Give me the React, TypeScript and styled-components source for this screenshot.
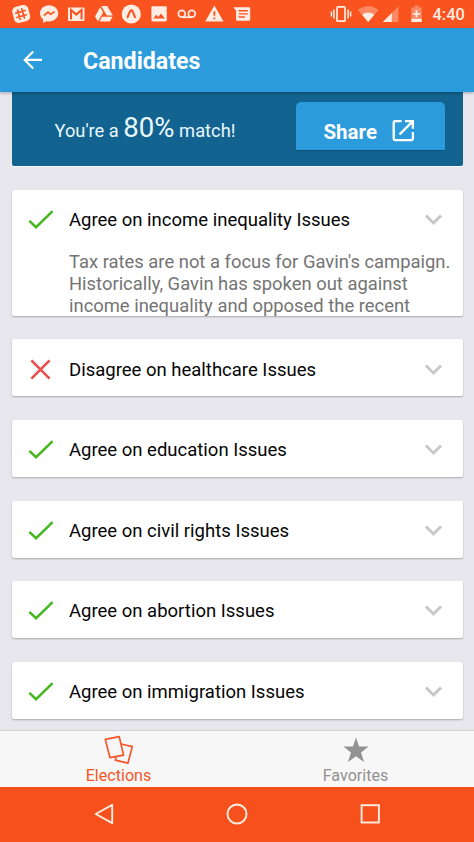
import React from 'react';
import styled, { createGlobalStyle } from 'styled-components';

const GlobalStyle = createGlobalStyle`
  *, *::before, *::after { box-sizing: border-box; }
  body { margin: 0; font-family: Roboto, "Noto Sans", sans-serif; }
  svg { display: block; flex: none; }
`;

const Screen = styled.div`
  display: flex;
  flex-direction: column;
  width: 474px;
  height: 842px;
  overflow: hidden;
  background: #e8e7ed;
`;

const StatusBar = styled.div`
  display: flex;
  align-items: center;
  justify-content: space-between;
  flex: none;
  height: 28px;
  padding: 0 9.5px 0 11px;
  background: #f9531f;
  color: #ffece3;
`;

const Notifications = styled.div`
  display: flex;
  gap: 7.6px;
`;

const SystemIcons = styled.div`
  display: flex;
  align-items: center;
`;

const BatterySlot = styled.span`
  margin-left: 11px;
`;

const Clock = styled.span`
  margin-left: 10px;
  width: 32px;
  font-size: 16.4px;
  font-weight: 500;
  line-height: 28px;
  padding-top: 1px;
  white-space: nowrap;
`;

const AppBar = styled.header`
  display: flex;
  align-items: center;
  gap: 37px;
  flex: none;
  z-index: 1;
  height: 64px;
  padding: 0 20px;
  background: #2c9bdb;
  color: #fff;
  box-shadow: 0 1px 3px rgba(0, 0, 0, 0.3);
`;

const Title = styled.h1`
  margin: 2px 0 0;
  font-size: 23.2px;
  line-height: 28px;
  font-weight: 700;
`;

const Content = styled.main`
  display: flex;
  flex-direction: column;
  gap: 23.6px;
  flex: 1;
  min-height: 0;
  padding: 0 11.5px;
  overflow: hidden;
`;

const MatchBanner = styled.section`
  display: flex;
  align-items: flex-start;
  justify-content: space-between;
  flex: none;
  height: 74px;
  padding: 10px 17.5px 0 43px;
  border-radius: 0 0 2px 2px;
  background: #136390;
  color: #e9f7ff;
  box-shadow: 0 1px 1px rgba(255, 255, 255, 0.8);
`;

const MatchText = styled.p`
  margin: 9px 0 0;
  font-size: 18.3px;
  line-height: 34px;
  white-space: nowrap;
`;

const Percent = styled.span`
  font-size: 27.6px;
`;

const ShareButton = styled.button`
  display: flex;
  align-items: center;
  gap: 14px;
  width: 149px;
  height: 48px;
  padding: 11px 0 0 27.5px;
  border: 0;
  border-radius: 5px 5px 0 0;
  background: #2c9bdb;
  color: #fff;
  font: 700 20.5px Roboto, sans-serif;
  box-shadow: 0 1px 1px rgba(0, 30, 60, 0.25);
`;

const Card = styled.article<{ $expanded?: boolean }>`
  flex: none;
  height: ${(p) => (p.$expanded ? 126.2 : 57)}px;
  overflow: hidden;
  border-radius: 2.5px;
  background: #fff;
  box-shadow: 0 1px 2px rgba(0, 0, 0, 0.27);
`;

const CardHeader = styled.div`
  display: flex;
  align-items: center;
  height: 60.5px;
  padding: 0 19px 0 16px;
`;

const CardTitle = styled.h2`
  flex: 1;
  margin: 0 0 0 15.5px;
  color: #050505;
  font-size: 18.5px;
  line-height: 24px;
  font-weight: 400;
  white-space: nowrap;
`;

const CardBody = styled.p`
  margin: 0 0 0 57.5px;
  padding-top: 1.4px;
  color: #747474;
  font-size: 18.4px;
  line-height: 21.8px;
  white-space: nowrap;
`;

const TabBar = styled.nav`
  display: grid;
  grid-template-columns: 1fr 1fr;
  flex: none;
  height: 56.5px;
  border-top: 1px solid #d3d2d5;
  background: #f7f7f7;
`;

const Tab = styled.div<{ $active?: boolean }>`
  display: flex;
  flex-direction: column;
  align-items: center;
  gap: 1px;
  padding-top: 4px;
  color: ${(p) => (p.$active ? '#f4562a' : '#929292')};
  font-size: 16.1px;
  line-height: 20px;
`;

const NavBar = styled.div`
  display: flex;
  align-items: center;
  justify-content: space-between;
  flex: none;
  height: 55.5px;
  padding: 0 92px;
  background: #f6511d;
`;

const BG = '#f9531f';

const SlackIcon = () => (
  <svg width="20" height="20" viewBox="0 0 20 20">
    <rect x="2" y="1.8" width="16.4" height="16.4" rx="4.6" transform="rotate(-14 10 10)" fill="currentColor" />
    <g stroke={BG} strokeWidth="1.6" strokeLinecap="round" transform="rotate(-16 10 10)">
      <path d="M7.8 5.2v9.6M12.2 5.2v9.6M5.2 7.8h9.6M5.2 12.2h9.6" />
    </g>
  </svg>
);

const MessengerIcon = () => (
  <svg width="20" height="20" viewBox="0 0 20 20">
    <path d="M10.1 1.2c-5.1 0-9.1 3.6-9.1 8.1 0 2.6 1.2 4.7 3.1 6.2v3.6l3.3-1.9c.9.2 1.8.3 2.7.3 5.1 0 9.1-3.7 9.1-8.2s-4-8.1-9.1-8.1z" fill="currentColor" />
    <path d="m4.9 11.6 4.2-3.5 2.4 2.2 4-2.5" fill="none" stroke={BG} strokeWidth="1.6" />
  </svg>
);

const GmailIcon = () => (
  <svg width="20" height="20" viewBox="0 0 20 20">
    <rect x="2" y="3.4" width="16.5" height="13.6" rx="1" fill="currentColor" />
    <path d="M5 15.4V6l5.3 4.6L15.6 6v9.4" fill="none" stroke={BG} strokeWidth="2" />
  </svg>
);

const DriveIcon = () => (
  <svg width="20" height="20" viewBox="0 0 20 20" fill="currentColor">
    <path d="M7.2 2h6l5.6 9.6h-6z" />
    <path d="M6.2 3.2 1 12.6l2.9 5 5.3-9.2z" />
    <path d="m8.1 12.8-2.7 4.8h10.4l2.8-4.8z" />
  </svg>
);

const ExpoIcon = () => (
  <svg width="20" height="20" viewBox="0 0 20 20">
    <circle cx="10.3" cy="10" r="9.6" fill="currentColor" />
    <path d="m6.6 13.2 2.6-6.4c.3-.8 1.9-.8 2.2 0l2.6 6.4" fill="none" stroke={BG} strokeWidth="2" strokeLinecap="round" />
  </svg>
);

const PhotoIcon = () => (
  <svg width="20" height="20" viewBox="0 0 20 20">
    <rect x="2.4" y="2.2" width="15.4" height="15.2" rx="1.4" fill="currentColor" />
    <path d="m4.3 14.6 2.9-3.9 2.1 2.4 2.7-3.7 3.9 5.2z" fill={BG} />
  </svg>
);

const VoicemailIcon = () => (
  <svg width="20" height="20" viewBox="0 0 20 20" fill="none" stroke="currentColor" strokeWidth="1.8">
    <circle cx="4.8" cy="9.8" r="3.4" />
    <circle cx="14.8" cy="9.8" r="3.4" />
    <path d="M4.8 13.2h10" />
  </svg>
);

const WarningIcon = () => (
  <svg width="20" height="20" viewBox="0 0 20 20">
    <path d="M10.4 1.6 19.6 17.4H1.2z" fill="currentColor" />
    <path d="M10.4 7.2v4.6M10.4 13.4v1.8" stroke={BG} strokeWidth="1.8" />
  </svg>
);

const MessageIcon = () => (
  <svg width="20" height="20" viewBox="0 0 20 20">
    <path d="M1.4 3.2h16c.5 0 .8.3.8.8v12c0 .5-.3.8-.8.8H5a.9.9 0 0 1-.9-.8V6.8z" fill="currentColor" />
    <path d="M6.6 6.8h9.2M6.6 9.9h9.2M6.6 13h6.2" stroke={BG} strokeWidth="1.4" />
  </svg>
);

const VibrateIcon = () => (
  <svg width="22" height="20" viewBox="0 0 22 20" fill="none" stroke="currentColor">
    <rect x="7" y="2.9" width="8" height="14.3" rx=".8" strokeWidth="1.7" />
    <path d="M3.9 5.4v9.2M18.1 5.4v9.2" strokeWidth="1.6" />
    <path d="M1.4 7.6v4.8M20.6 7.6v4.8" strokeWidth="1.5" />
  </svg>
);

const WifiIcon = () => (
  <svg width="30" height="20" viewBox="0 0 30 20" fill="currentColor">
    <path d="M5.8 6.1C11.4.9 21 .9 26.6 6.1L16.2 18z" opacity=".35" />
    <path d="M10.2 11c3.4-3.2 8.6-3.2 12 0l-6 7z" />
  </svg>
);

const SignalIcon = () => (
  <svg width="17" height="20" viewBox="0 0 17 20" fill="currentColor">
    <path d="M.8 18 16.4 2.2V18z" opacity=".35" />
    <path d="M.8 18 9.8 8.9V18z" />
  </svg>
);

const BatteryIcon = () => (
  <svg width="13" height="20" viewBox="0 0 13 20" fill="currentColor">
    <path d="M4.2 1.5h4.6v1.9h3v11.2H1.2V3.4h3z" opacity=".35" />
    <path d="M1.2 14.6h10.6V18H1.2z" />
    <path d="M2.8 9.8h7.4M6.5 6.1v7.2" stroke="currentColor" strokeWidth="1.8" />
  </svg>
);

const BackArrow = () => (
  <svg width="26" height="22" viewBox="0 0 26 22" fill="none" stroke="currentColor" strokeWidth="2.1">
    <path d="M22 10.9H5M13.2 2.4 4.7 10.9l8.5 8.5" />
  </svg>
);

const ShareIcon = () => (
  <svg width="25" height="25" viewBox="0 0 25 25" fill="none" stroke="currentColor" strokeWidth="2.3">
    <path d="M10.6 2.1H4c-.8 0-1.3.5-1.3 1.3v16.4c0 .8.5 1.3 1.3 1.3h16.6c.8 0 1.3-.5 1.3-1.3v-6.8" />
    <path d="M14 2.1h7.9v7.7M21.4 2.6 8.6 15.4" />
  </svg>
);

const CheckIcon = () => (
  <svg width="26" height="22" viewBox="0 0 26 22" fill="none" stroke="#45b91f" strokeWidth="2.6">
    <path d="m1.3 11.9 6.8 6.4L24.6 2.1" />
  </svg>
);

const CrossIcon = () => (
  <svg width="26" height="22" viewBox="0 0 26 22" fill="none" stroke="#e8504e" strokeWidth="2.6">
    <path d="m3.4 1.4 18.2 18.2M21.6 1.4 3.4 19.6" />
  </svg>
);

const ChevronIcon = () => (
  <svg width="20" height="14" viewBox="0 0 20 14" fill="none" stroke="#c8c8c8" strokeWidth="3">
    <path d="m1.9 2.5 7.6 7.5 7.6-7.5" />
  </svg>
);

const CardsIcon = () => (
  <svg width="30" height="30" viewBox="0 0 30 30" fill="none" stroke="currentColor" strokeWidth="1.7" strokeLinejoin="round">
    <path d="m1.3 4.4 13.9-2.8 4.4 18.5L6 22.7z" />
    <path d="m17 9 11.3 2.6-4.4 16.6-12.6-3 .8-3" />
  </svg>
);

const StarIcon = () => (
  <svg width="30" height="30" viewBox="0 0 30 30" fill="currentColor">
    <path d="m15 2.5 3.1 9h9.4l-7.5 5.9 3 9.6-8-5.7L7 27l3-9.6-7.5-5.9h9.4z" />
  </svg>
);

const navIcon = { fill: 'none', stroke: '#ffede3', strokeWidth: 1.9 };

const BackIcon = () => (
  <svg width="24" height="24" viewBox="0 0 24 24" {...navIcon} strokeLinejoin="round">
    <path d="M20.2 2.8v18.4L3.7 12z" />
  </svg>
);

const HomeIcon = () => (
  <svg width="24" height="24" viewBox="0 0 24 24" {...navIcon}>
    <circle cx="12" cy="12" r="9.5" />
  </svg>
);

const RecentsIcon = () => (
  <svg width="24" height="24" viewBox="0 0 24 24" {...navIcon}>
    <rect x="3.6" y="3.2" width="17.3" height="17.3" />
  </svg>
);

type Issue = { topic: string; agree: boolean; details?: string[] };

const issues: Issue[] = [
  {
    topic: 'income inequality',
    agree: true,
    details: [
      "Tax rates are not a focus for Gavin's campaign.",
      'Historically, Gavin has spoken out against',
      'income inequality and opposed the recent',
    ],
  },
  { topic: 'healthcare', agree: false },
  { topic: 'education', agree: true },
  { topic: 'civil rights', agree: true },
  { topic: 'abortion', agree: true },
  { topic: 'immigration', agree: true },
];

const IssueCard = ({ topic, agree, details }: Issue) => (
  <Card $expanded={!!details}>
    <CardHeader>
      {agree ? <CheckIcon /> : <CrossIcon />}
      <CardTitle>{`${agree ? 'Agree' : 'Disagree'} on ${topic} Issues`}</CardTitle>
      <ChevronIcon />
    </CardHeader>
    {details && (
      <CardBody>
        {details.map((line) => (
          <React.Fragment key={line}>
            {line}
            <br />
          </React.Fragment>
        ))}
      </CardBody>
    )}
  </Card>
);

export default function App() {
  return (
    <>
      <GlobalStyle />
      <Screen>
        <StatusBar>
          <Notifications>
            <SlackIcon />
            <MessengerIcon />
            <GmailIcon />
            <DriveIcon />
            <ExpoIcon />
            <PhotoIcon />
            <VoicemailIcon />
            <WarningIcon />
            <MessageIcon />
          </Notifications>
          <SystemIcons>
            <VibrateIcon />
            <WifiIcon />
            <SignalIcon />
            <BatterySlot>
              <BatteryIcon />
            </BatterySlot>
            <Clock>4:40</Clock>
          </SystemIcons>
        </StatusBar>
        <AppBar>
          <BackArrow />
          <Title>Candidates</Title>
        </AppBar>
        <Content>
          <MatchBanner>
            <MatchText>
              You're a <Percent>80%</Percent> match!
            </MatchText>
            <ShareButton>
              Share
              <ShareIcon />
            </ShareButton>
          </MatchBanner>
          {issues.map((issue) => (
            <IssueCard key={issue.topic} {...issue} />
          ))}
        </Content>
        <TabBar>
          <Tab $active>
            <CardsIcon />
            Elections
          </Tab>
          <Tab>
            <StarIcon />
            Favorites
          </Tab>
        </TabBar>
        <NavBar>
          <BackIcon />
          <HomeIcon />
          <RecentsIcon />
        </NavBar>
      </Screen>
    </>
  );
}
